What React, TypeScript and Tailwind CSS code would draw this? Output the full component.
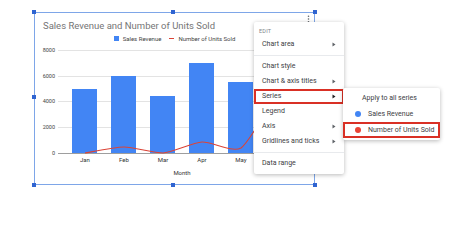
import React from "react";

const FONT = "font-['Roboto','Liberation_Sans',sans-serif]";

// only Jan..May show; Jun's label sits under the menu
const months = ["Jan", "Feb", "Mar", "Apr", "May"];
// bar tops and line points in plot coordinates (baseline at y=108)
const barTops = [44, 31, 51, 18, 37, 12];
const linePts: [number, number][] = [
  [50, 108],
  [89, 102],
  [128, 108],
  [167, 97],
  [206, 103],
  [245, 43],
];

function smoothPath(pts: [number, number][]) {
  let d = `M${pts[0][0]},${pts[0][1]}`;
  for (let i = 0; i < pts.length - 1; i++) {
    const p0 = pts[i - 1] ?? pts[i];
    const p1 = pts[i];
    const p2 = pts[i + 1];
    const p3 = pts[i + 2] ?? p2;
    const t = 0.12;
    const c1 = [p1[0] + (p2[0] - p0[0]) * t, Math.min(108, p1[1] + (p2[1] - p0[1]) * t)];
    const c2 = [p2[0] - (p3[0] - p1[0]) * t, Math.min(108, p2[1] - (p3[1] - p1[1]) * t)];
    d += ` C${c1[0]},${c1[1]} ${c2[0]},${c2[1]} ${p2[0]},${p2[1]}`;
  }
  return d;
}

function Plot() {
  const grid = [
    { y: 5, label: "8000" },
    { y: 31, label: "6000" },
    { y: 56, label: "4000" },
    { y: 82, label: "2000" },
  ];
  return (
    <svg width="279" height="138" viewBox="0 0 279 138" className="block">
      {grid.map((g) => (
        <g key={g.label}>
          <line x1="23" x2="272" y1={g.y + 0.5} y2={g.y + 0.5} stroke="#e3e3e3" strokeWidth="1" />
          <text x="20" y={g.y + 2} textAnchor="end" fontSize="5.5" fill="#444" fontFamily="Roboto, sans-serif">
            {g.label}
          </text>
        </g>
      ))}
      <text x="20" y="110" textAnchor="end" fontSize="5.5" fill="#444" fontFamily="Roboto, sans-serif">
        0
      </text>
      {barTops.map((top, i) => (
        <rect key={i} x={37 + i * 39} y={top} width="25" height={108 - top} fill="#4285f4" />
      ))}
      <line x1="23" x2="272" y1="108.5" y2="108.5" stroke="#9e9e9e" strokeWidth="1" />
      <path d={smoothPath(linePts)} fill="none" stroke="#db4437" strokeWidth="1.1" />
      {months.map((m, i) => (
        <text key={m} x={50 + i * 39} y="116.5" textAnchor="middle" fontSize="6" fill="#333" fontFamily="Roboto, sans-serif">
          {m}
        </text>
      ))}
      <text x="147" y="130" textAnchor="middle" fontSize="6" fill="#333" fontFamily="Roboto, sans-serif">
        Month
      </text>
    </svg>
  );
}

function Arrow({ dark }: { dark?: boolean }) {
  return (
    <svg width="4" height="5" viewBox="0 0 4 5" className="mr-[8px]">
      <path d="M0.5 0.5 L3.5 2.5 L0.5 4.5 Z" fill={dark ? "#202124" : "#5f6368"} />
    </svg>
  );
}

function MenuItem({ label, arrow, selected }: { label: string; arrow?: boolean; selected?: boolean }) {
  return (
    <div
      className={`flex h-[15px] items-center justify-between pl-[8px] text-[7px] text-[#3c4043] ${
        selected ? "ring-2 ring-inset ring-[#d93025]" : ""
      }`}
    >
      <span>{label}</span>
      {arrow && <Arrow dark={selected} />}
    </div>
  );
}

function Handle({ className }: { className: string }) {
  return <div className={`absolute h-[4px] w-[4px] bg-[#2f64d1] ${className}`} />;
}

export default function App() {
  return (
    <div className={`relative h-[200px] w-[474px] overflow-hidden bg-white ${FONT}`}>
      {/* chart frame */}
      <div className="relative ml-[34px] mt-[12px] h-[173px] w-[281px] border border-[#7ea6e8] bg-white">
        <div className="h-[19px] pl-[8px] pt-[7px] text-[9.5px] leading-[11px] text-[#757575]">
          Sales Revenue and Number of Units Sold
        </div>
        <div className="flex h-[13px] items-center justify-center text-[6px] text-[#444]">
          <span className="mr-[4px] h-[5px] w-[5px] bg-[#4285f4]" />
          <span>Sales Revenue</span>
          <span className="ml-[8px] mr-[4px] h-[1.5px] w-[5px] bg-[#db4437]" />
          <span>Number of Units Sold</span>
        </div>
        <Plot />

        {/* kebab */}
        <svg width="3" height="8" viewBox="0 0 3 8" className="absolute left-[272px] top-[2px]">
          <circle cx="1.5" cy="1.2" r="0.8" fill="#5f6368" />
          <circle cx="1.5" cy="4" r="0.8" fill="#5f6368" />
          <circle cx="1.5" cy="6.8" r="0.8" fill="#5f6368" />
        </svg>

        <Handle className="-left-[3px] -top-[3px]" />
        <Handle className="left-[136px] -top-[3px]" />
        <Handle className="-right-[3px] -top-[3px]" />
        <Handle className="-left-[3px] top-[82px]" />
        <Handle className="-left-[3px] -bottom-[3px]" />
        <Handle className="left-[136px] -bottom-[3px]" />
        <Handle className="-right-[3px] -bottom-[3px]" />
      </div>

      {/* edit menu */}
      <div className="absolute left-[254px] top-[22px] w-[90px] rounded-[2px] bg-white py-[3px] shadow-[0_1px_4px_rgba(0,0,0,0.28)]">
        <div className="flex h-[12px] items-center pl-[5px] text-[5.5px] tracking-[0.2px] text-[#80868b]">EDIT</div>
        <MenuItem label="Chart area" arrow />
        <div className="my-[3px] h-px bg-[#e8eaed]" />
        <MenuItem label="Chart style" />
        <MenuItem label="Chart & axis titles" arrow />
        <MenuItem label="Series" arrow selected />
        <MenuItem label="Legend" />
        <MenuItem label="Axis" arrow />
        <MenuItem label="Gridlines and ticks" arrow />
        <div className="my-[3px] h-px bg-[#e8eaed]" />
        <MenuItem label="Data range" />
      </div>

      {/* series submenu */}
      <div className="absolute left-[343px] top-[88px] w-[97px] rounded-[2px] bg-white pb-[2px] pt-[3px] text-[7px] text-[#3c4043] shadow-[0_1px_4px_rgba(0,0,0,0.28)]">
        <div className="flex h-[15px] items-center pl-[19px]">Apply to all series</div>
        <div className="flex h-[16px] items-center pl-[12px]">
          <span className="mr-[7px] h-[6px] w-[6px] rounded-full bg-[#4285f4]" />
          Sales Revenue
        </div>
        <div className="flex h-[16px] items-center pl-[12px] ring-2 ring-inset ring-[#d93025]">
          <span className="mr-[7px] h-[6px] w-[6px] rounded-full bg-[#ea4335]" />
          Number of Units Sold
        </div>
      </div>
    </div>
  );
}
